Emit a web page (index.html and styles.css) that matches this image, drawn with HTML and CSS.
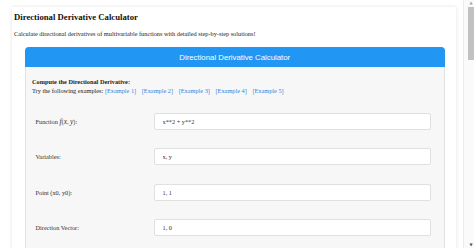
FILE: index.html
```html
<!DOCTYPE html>
<html lang="en">
<head>
  <meta charset="UTF-8" />
  <meta name="viewport" content="width=device-width, initial-scale=1.0"/>
  <title>Directional Derivative Calculator</title>
  <link rel="stylesheet" href="styles.css">
</head>
<body>

<div class="page">
  <div class="container">
    <h1>Directional Derivative Calculator</h1>
    <p class="intro">Calculate directional derivatives of multivariable functions with detailed step-by-step solutions!</p>

    <div class="calc-panel">
      <div class="calc-header">Directional Derivative Calculator</div>
      <div class="calc-body">
        <p class="calc-title">Compute the Directional Derivative:</p>
        <p class="examples">Try the following examples:
          <a href="#" class="example-link">[Example 1]</a>
          <a href="#" class="example-link">[Example 2]</a>
          <a href="#" class="example-link">[Example 3]</a>
          <a href="#" class="example-link">[Example 4]</a>
          <a href="#" class="example-link">[Example 5]</a>
        </p>

        <form id="derivativeForm" class="calc-form">
          <div class="form-row">
            <label for="func">Function <i class="math">f</i>(<i class="math">x</i>, <i class="math">y</i>):</label>
            <input type="text" id="func" value="x**2 + y**2">
          </div>
          <div class="form-row">
            <label for="vars">Variables:</label>
            <input type="text" id="vars" value="x, y">
          </div>
          <div class="form-row">
            <label for="point">Point (x0, y0):</label>
            <input type="text" id="point" value="1, 1">
          </div>
          <div class="form-row">
            <label for="direction">Direction Vector:</label>
            <input type="text" id="direction" value="1, 0">
          </div>
        </form>
      </div>
    </div>
  </div>
</div>

<!-- window scrollbar as seen in the screenshot -->
<div class="scrollbar">
  <span class="scroll-arrow">&#9650;</span>
  <div class="scroll-thumb"></div>
  <span class="scroll-arrow down">&#9660;</span>
</div>

</body>
</html>
```

FILE: styles.css
```css
* {
  box-sizing: border-box;
}

html, body {
  margin: 0;
  height: 100%;
  background: #fff;
  font-family: "Liberation Serif", "Times New Roman", serif;
  color: #222;
}

body {
  display: flex;
  overflow: hidden;
}

.page {
  flex: 1;
  min-width: 0;
  height: 100vh;
  overflow: hidden;
  padding: 7px 7px 0 11.5px;
}

.container {
  background: #fff;
  box-shadow: 0 0 4px rgba(0,0,0,0.12);
  padding: 5px 11.5px 20px 2.5px;
}

h1 {
  font-size: 8.7px;
  font-weight: bold;
  margin: 0 0 8px;
  line-height: 10px;
  color: #111;
}

.intro {
  font-size: 6.3px;
  line-height: 7px;
  margin: 0 0 10px;
  color: #222;
}

.calc-panel {
  margin-left: 11px;
  background: #f7f7f7;
  border: 1px solid #e2e2e2;
  border-radius: 4px 4px 0 0;
}

.calc-header {
  background: #2196f3;
  color: #fff;
  font-family: "Liberation Sans", Arial, sans-serif;
  font-size: 7.8px;
  line-height: 9px;
  text-align: center;
  padding: 5.5px 0 5.5px;
  margin: -1px -1px 0;
  border-radius: 4px 4px 0 0;
}

.calc-body {
  padding: 10px 7px 60px 6px;
}

.calc-title,
.examples {
  font-size: 6.3px;
  line-height: 9px;
  margin: 0;
  color: #222;
}

.calc-title {
  font-weight: bold;
}

.example-link {
  color: #2a86dd;
  text-decoration: none;
  margin-right: 4px;
}

.calc-form {
  display: flex;
  flex-direction: column;
  gap: 18.5px;
  margin: 17.8px 5.5px 0 3.5px;
}

.form-row {
  display: grid;
  grid-template-columns: 118px 1fr;
  align-items: center;
}

.form-row label {
  font-size: 6.3px;
  color: #333;
}

.form-row .math {
  font-size: 7.4px;
}

.form-row input {
  height: 17px;
  padding: 0 8px;
  font-family: "Liberation Serif", "Times New Roman", serif;
  font-size: 6.3px;
  color: #333;
  background: #fff;
  border: 1px solid #e0e0e0;
  border-radius: 2px;
  outline: none;
}

.scrollbar {
  width: 11px;
  height: 100vh;
  flex-shrink: 0;
  display: flex;
  flex-direction: column;
  align-items: flex-end;
  background: #fafafa;
  border-left: 1px solid #ececec;
}

.scroll-arrow {
  width: 6px;
  height: 6px;
  font-size: 4px;
  line-height: 6px;
  text-align: center;
  color: #a3a3a3;
  font-family: "DejaVu Sans", sans-serif;
}

.scroll-arrow.down {
  margin-top: auto;
  color: #505050;
}

.scroll-thumb {
  width: 6px;
  height: 53px;
  margin-top: 1px;
  background: #c1c1c1;
}
```
